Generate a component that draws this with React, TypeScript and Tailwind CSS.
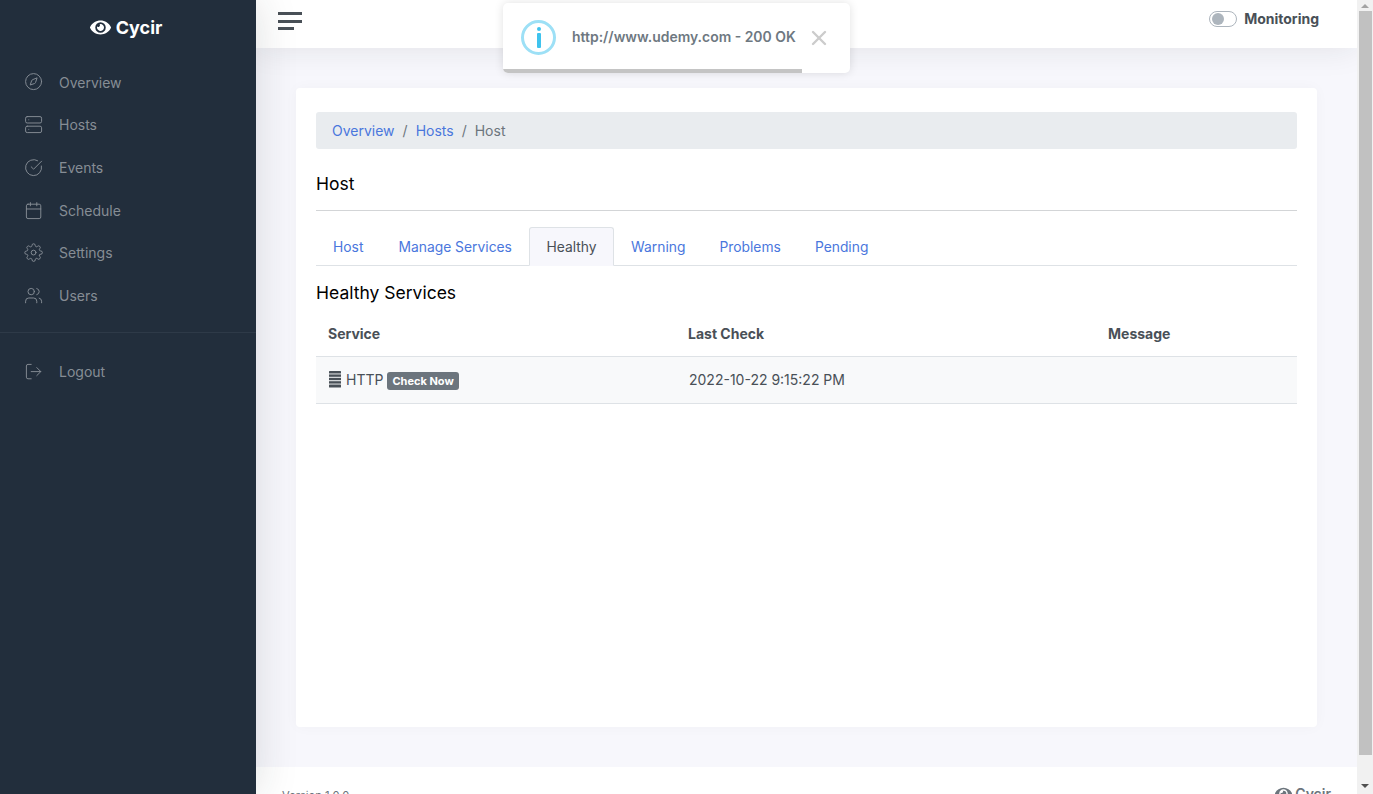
import { Compass, Server, CircleCheckBig, Calendar, Users, LogOut, X } from "lucide-react";
import type { SVGProps } from "react";
import { FaEye } from "react-icons/fa";

function Gear(props: SVGProps<SVGSVGElement> & { strokeWidth?: number }) {
  return (
    <svg viewBox="0 0 24 24" fill="none" stroke="currentColor" strokeLinecap="round" strokeLinejoin="round" {...props}>
      <circle cx="12" cy="12" r="3" />
      <path d="M19.4 15a1.65 1.65 0 0 0 .33 1.82l.06.06a2 2 0 0 1 0 2.83 2 2 0 0 1-2.83 0l-.06-.06a1.65 1.65 0 0 0-1.82-.33 1.65 1.65 0 0 0-1 1.51V21a2 2 0 0 1-2 2 2 2 0 0 1-2-2v-.09A1.65 1.65 0 0 0 9 19.4a1.65 1.65 0 0 0-1.82.33l-.06.06a2 2 0 0 1-2.83 0 2 2 0 0 1 0-2.83l.06-.06a1.65 1.65 0 0 0 .33-1.82 1.65 1.65 0 0 0-1.51-1H3a2 2 0 0 1-2-2 2 2 0 0 1 2-2h.09A1.65 1.65 0 0 0 4.6 9a1.65 1.65 0 0 0-.33-1.82l-.06-.06a2 2 0 0 1 0-2.83 2 2 0 0 1 2.83 0l.06.06a1.65 1.65 0 0 0 1.82.33H9a1.65 1.65 0 0 0 1-1.51V3a2 2 0 0 1 2-2 2 2 0 0 1 2 2v.09a1.65 1.65 0 0 0 1 1.51 1.65 1.65 0 0 0 1.82-.33l.06-.06a2 2 0 0 1 2.83 0 2 2 0 0 1 0 2.83l-.06.06a1.65 1.65 0 0 0-.33 1.82V9a1.65 1.65 0 0 0 1.51 1H21a2 2 0 0 1 2 2 2 2 0 0 1-2 2h-.09a1.65 1.65 0 0 0-1.51 1z" />
    </svg>
  );
}

const navItems = [
  { label: "Overview", icon: Compass },
  { label: "Hosts", icon: Server },
  { label: "Events", icon: CircleCheckBig },
  { label: "Schedule", icon: Calendar },
  { label: "Settings", icon: Gear },
  { label: "Users", icon: Users },
];

const tabs = ["Host", "Manage Services", "Healthy", "Warning", "Problems", "Pending"];

function Sidebar() {
  return (
    <aside className="w-[256px] h-full shrink-0 bg-[#222e3c] flex flex-col shadow-[0_0_40px_rgba(33,37,41,0.15)] z-10">
      <div className="h-[54px] flex items-center justify-center gap-[5px] pr-[4px] text-white text-[18px] font-bold">
        <FaEye className="w-[21px] h-[21px]" />
        <span>Cycir</span>
      </div>
      <nav className="mt-[6.7px] flex flex-col">
        {navItems.map(({ label, icon: Icon }) => (
          <div key={label} className="h-[42.7px] flex items-center pl-[24px] gap-[15.8px] text-[14px] text-[#868d95]">
            <Icon className="w-[19.2px] h-[19.2px]" strokeWidth={1.2} />
            <span>{label}</span>
          </div>
        ))}
      </nav>
      <div className="mt-[15.3px] border-t border-[#2e3a48]" />
      <div className="mt-[17px] h-[42.7px] flex items-center pl-[24px] gap-[15.8px] text-[14px] text-[#868d95]">
        <LogOut className="w-[19.2px] h-[19.2px]" strokeWidth={1.2} />
        <span>Logout</span>
      </div>
    </aside>
  );
}

function Topbar() {
  return (
    <header className="h-[48px] shrink-0 bg-white flex items-center justify-between pl-[22px] pr-[38px] shadow-[0_0_32px_rgba(33,37,41,0.1)] z-[5]">
      <div className="flex flex-col gap-[4.5px] -mt-[6px]">
        <div className="w-[24px] h-[3px] bg-[#495057]" />
        <div className="w-[24px] h-[3px] bg-[#495057]" />
        <div className="w-[16px] h-[3px] bg-[#495057]" />
      </div>
      <div className="flex items-center gap-[7px] -mt-[11px]">
        <div className="w-[28px] h-[16px] rounded-full border border-[#adb5bd] bg-white flex items-center pl-[2px]">
          <div className="w-[12px] h-[12px] rounded-full bg-[#adb5bd]" />
        </div>
        <span className="text-[14px] font-bold text-[#495057]">Monitoring</span>
      </div>
    </header>
  );
}

function Toast() {
  return (
    <div className="absolute left-[503px] top-[3px] w-[347px] h-[70px] bg-white rounded-[5px] overflow-hidden shadow-[0_0_10px_rgba(0,0,0,0.12)] z-20">
      <div className="h-[66px] flex items-center pl-[18px]">
        <div className="w-[35px] h-[35px] rounded-full border-[3px] border-[#9de0f6] flex flex-col items-center justify-center gap-[2px] shrink-0 mt-[3px]">
          <div className="w-[4px] h-[4px] rounded-full bg-[#3fc3ee]" />
          <div className="w-[4px] h-[15px] rounded-[1px] bg-[#3fc3ee]" />
        </div>
        <span className="ml-[16px] w-[224px] text-[13.95px] font-semibold text-[#6e7881] mt-[3px] whitespace-nowrap">http://www.udemy.com - 200 OK</span>
        <X className="ml-[11px] mt-[3px] w-[24px] h-[24px] text-[#cccccc] shrink-0" strokeWidth={2.4} />
      </div>
      <div className="w-[299px] h-[4px] bg-[#c4c4c4]" />
    </div>
  );
}

function ServerBars() {
  return (
    <svg width="12" height="17" viewBox="0 0 12 17" className="shrink-0 text-[#495057]" fill="currentColor">
      <rect x="0" y="0" width="12" height="2.4" rx="0.5" />
      <rect x="0" y="3.4" width="12" height="2.4" />
      <rect x="0" y="6.8" width="12" height="2.4" />
      <rect x="0" y="10.2" width="12" height="2.4" />
      <rect x="0" y="13.6" width="12" height="2.9" rx="0.5" />
    </svg>
  );
}

function Card() {
  return (
    <div className="h-[639px] bg-white rounded-[4px] shadow-[0_0_14px_rgba(33,37,41,0.03)] p-[20px] pt-[24px] text-[14px] text-[#495057]">
      <div className="h-[37px] bg-[#e9ecef] rounded-[3px] flex items-center px-[16px]">
        <span className="text-[#4a77dd]">Overview</span>
        <span className="px-[8px] text-[#6c757d]">/</span>
        <span className="text-[#4a77dd]">Hosts</span>
        <span className="px-[8px] text-[#6c757d]">/</span>
        <span className="text-[#6c757d]">Host</span>
      </div>
      <h3 className="mt-[24px] text-[17.5px] leading-[21px] text-black">Host</h3>
      <div className="mt-[16px] border-t border-[#d3d5d7]" />
      <div className="mt-[16px] h-[39px] flex border-b border-[#dee2e6] text-[13.85px]">
        {tabs.map((tab) =>
          tab === "Healthy" ? (
            <div key={tab} className="h-[39px] px-[16.5px] pt-[1px] flex items-center bg-[#f7f7fc] border border-[#dee2e6] border-b-[#f7f7fc] rounded-t-[3px] text-[#495057]">
              {tab}
            </div>
          ) : (
            <div key={tab} className="h-[38px] px-[17px] pt-[2px] flex items-center text-[#4a77dd] first:mr-[1px]">
              {tab}
            </div>
          )
        )}
      </div>
      <h4 className="mt-[16px] text-[17.5px] leading-[21px] text-black">Healthy Services</h4>
      <div className="mt-[9px] grid grid-cols-[360px_420px_1fr] h-[45px] pb-[1px] items-center border-b border-[#dee2e6] font-bold text-[#495057]">
        <div className="px-[12px]">Service</div>
        <div className="px-[12px]">Last Check</div>
        <div className="px-[12px]">Message</div>
      </div>
      <div className="grid grid-cols-[360px_420px_1fr] h-[47px] pb-[1px] items-center border-b border-[#dee2e6] bg-[#f8f9fa]">
        <div className="px-[13px] flex items-center">
          <ServerBars />
          <span className="ml-[5px]">HTTP</span>
          <span className="ml-[4px] h-[18px] px-[5px] flex items-center rounded-[3px] bg-[#6c757d] text-white text-[11px] font-bold mt-[3px]">Check Now</span>
        </div>
        <div className="pl-[13px] pr-[12px]">2022-10-22 9:15:22 PM</div>
        <div className="px-[12px]" />
      </div>
    </div>
  );
}

function Footer() {
  return (
    <footer className="h-[60px] shrink-0 bg-white flex justify-between items-start px-[26px] pt-[16px]">
      <span className="mt-[5px] text-[11.2px] text-[#6c757d]">Version 1.0.0</span>
      <span className="flex items-center gap-[3px] text-[14px] font-semibold text-[#6c757d]">
        <FaEye className="w-[17px] h-[17px]" />
        Cycir
      </span>
    </footer>
  );
}

function Scrollbar() {
  return (
    <div className="w-[16px] h-full shrink-0 bg-[#f1f1f1] flex flex-col items-center">
      <div className="h-[11px] flex items-center justify-center">
        <div className="w-0 h-0 border-l-[4px] border-r-[4px] border-b-[4px] border-l-transparent border-r-transparent border-b-[#a3a3a3]" />
      </div>
      <div className="w-[13px] h-[744px] bg-[#c1c1c1]" />
      <div className="mt-auto h-[17px] flex items-center justify-center">
        <div className="w-0 h-0 border-l-[4px] border-r-[4px] border-t-[4px] border-l-transparent border-r-transparent border-t-[#505050]" />
      </div>
    </div>
  );
}

export default function App() {
  return (
    <div className="relative h-[794px] w-full flex overflow-hidden font-['Inter',sans-serif] bg-[#f7f7fc]">
      <Sidebar />
      <div className="flex-1 min-w-0 h-full flex flex-col overflow-hidden">
        <Topbar />
        <main className="shrink-0 h-[719px] px-[40px] pt-[40px]">
          <Card />
        </main>
        <Footer />
      </div>
      <Scrollbar />
      <Toast />
    </div>
  );
}
